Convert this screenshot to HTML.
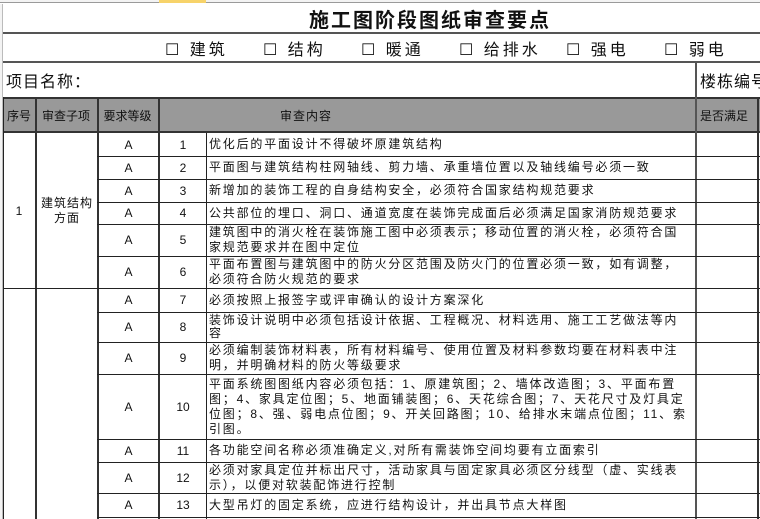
<!DOCTYPE html>
<html><head><meta charset="utf-8"><style>
body{margin:0;width:760px;height:519px;overflow:hidden;background:#fff;font-family:"Liberation Sans","Noto Sans CJK SC",sans-serif;position:relative;color:#111}
div{position:absolute;box-sizing:border-box}
.h{height:1px;background:#222}
.v{width:1px;background:#222}
.c{display:flex;align-items:center;justify-content:center;font-size:12px;white-space:nowrap}
.t{display:flex;align-items:center;font-size:12px;letter-spacing:1.8px;line-height:15px;left:209px;width:480px}
.k{top:34px;height:27px;font-size:16px;letter-spacing:3px;display:flex;align-items:center;white-space:nowrap}
</style></head><body>
<div style="left:0;top:0;width:760px;height:3px;background:#f3f3f3;border-bottom:1px solid #9a9a9a"></div>
<div style="left:159px;top:0;width:47px;height:3px;background:#f7d36a"></div>
<div style="left:0;top:4px;width:3px;height:515px;background:#f3f3f3;border-right:1px solid #bbb"></div>

<div class="c" style="left:130px;top:4px;width:600px;height:28px;font-size:20px;font-weight:bold;letter-spacing:2px">施工图阶段图纸审查要点</div>
<div class="h" style="left:3px;top:32px;width:757px;height:2px;background:#555"></div>
<div class="k" style="left:165px">☐ 建筑</div>
<div class="k" style="left:263px">☐ 结构</div>
<div class="k" style="left:361px">☐ 暖通</div>
<div class="k" style="left:459px">☐ 给排水</div>
<div class="k" style="left:566px">☐ 强电</div>
<div class="k" style="left:664px">☐ 弱电</div>
<div class="h" style="left:3px;top:61px;width:757px;height:2px;background:#555"></div>
<div class="c" style="left:6px;top:63px;height:34px;font-size:16px;letter-spacing:1px">项目名称：</div>
<div class="c" style="left:700px;top:63px;height:34px;font-size:16px;letter-spacing:1px">楼栋编号</div>
<div style="left:695px;top:61px;width:2px;height:36px;background:#555"></div>

<div style="left:3px;top:97px;width:757px;height:36px;background:#999;border-top:2px solid #333;border-bottom:2px solid #333"></div>
<div class="c" style="left:3px;top:97px;width:32px;height:36px">序号</div>
<div class="c" style="left:35px;top:97px;width:62px;height:36px">审查子项</div>
<div class="c" style="left:97px;top:97px;width:61px;height:36px">要求等级</div>
<div class="c" style="left:206px;top:97px;width:200px;height:36px;letter-spacing:1px">审查内容</div>
<div class="c" style="left:697px;top:97px;width:60px;height:36px;justify-content:flex-start;padding-left:3px">是否满足</div>

<div class="v" style="left:3px;top:97px;height:422px"></div>
<div class="v" style="left:35px;top:97px;height:422px;width:2px;background:#333"></div>
<div class="v" style="left:97px;top:97px;height:422px;width:2px;background:#333"></div>
<div class="v" style="left:158px;top:97px;height:422px;width:2px;background:#333"></div>
<div class="v" style="left:206px;top:133px;height:386px"></div>
<div class="v" style="left:695px;top:97px;height:422px;width:2px;background:#555"></div>
<div class="v" style="left:757px;top:97px;height:422px;width:2px;background:#333"></div>

<div class="h" style="left:97px;top:156px;width:663px"></div>
<div class="h" style="left:97px;top:179px;width:663px"></div>
<div class="h" style="left:97px;top:202px;width:663px"></div>
<div class="h" style="left:97px;top:224px;width:663px"></div>
<div class="h" style="left:97px;top:256px;width:663px"></div>
<div class="h" style="left:3px;top:288px;width:757px"></div>
<div class="h" style="left:97px;top:312px;width:663px"></div>
<div class="h" style="left:97px;top:342px;width:663px"></div>
<div class="h" style="left:97px;top:374px;width:663px"></div>
<div class="h" style="left:97px;top:439px;width:663px"></div>
<div class="h" style="left:97px;top:462px;width:663px"></div>
<div class="h" style="left:97px;top:493px;width:663px"></div>
<div class="h" style="left:97px;top:517px;width:663px"></div>

<div class="c" style="left:3px;top:133px;width:32px;height:155px">1</div>
<div class="c" style="left:37px;top:133px;width:60px;height:155px;white-space:normal;text-align:center;letter-spacing:1px;line-height:15px">建筑结构<br>方面</div>

<div class="c" style="left:99px;top:133px;width:59px;height:23px">A</div><div class="c" style="left:160px;top:133px;width:46px;height:23px">1</div><div class="t" style="top:133px;height:23px">优化后的平面设计不得破坏原建筑结构</div>
<div class="c" style="left:99px;top:156px;width:59px;height:23px">A</div><div class="c" style="left:160px;top:156px;width:46px;height:23px">2</div><div class="t" style="top:156px;height:23px">平面图与建筑结构柱网轴线、剪力墙、承重墙位置以及轴线编号必须一致</div>
<div class="c" style="left:99px;top:179px;width:59px;height:23px">A</div><div class="c" style="left:160px;top:179px;width:46px;height:23px">3</div><div class="t" style="top:179px;height:23px">新增加的装饰工程的自身结构安全，必须符合国家结构规范要求</div>
<div class="c" style="left:99px;top:202px;width:59px;height:22px">A</div><div class="c" style="left:160px;top:202px;width:46px;height:22px">4</div><div class="t" style="top:202px;height:22px">公共部位的埋口、洞口、通道宽度在装饰完成面后必须满足国家消防规范要求</div>
<div class="c" style="left:99px;top:224px;width:59px;height:32px">A</div><div class="c" style="left:160px;top:224px;width:46px;height:32px">5</div><div class="t" style="top:224px;height:32px">建筑图中的消火栓在装饰施工图中必须表示；移动位置的消火栓，必须符合国家规范要求并在图中定位</div>
<div class="c" style="left:99px;top:256px;width:59px;height:32px">A</div><div class="c" style="left:160px;top:256px;width:46px;height:32px">6</div><div class="t" style="top:256px;height:32px">平面布置图与建筑图中的防火分区范围及防火门的位置必须一致，如有调整，必须符合防火规范的要求</div>
<div class="c" style="left:99px;top:288px;width:59px;height:24px">A</div><div class="c" style="left:160px;top:288px;width:46px;height:24px">7</div><div class="t" style="top:288px;height:24px">必须按照上报签字或评审确认的设计方案深化</div>
<div class="c" style="left:99px;top:312px;width:59px;height:30px">A</div><div class="c" style="left:160px;top:312px;width:46px;height:30px">8</div><div class="t" style="top:312px;height:30px;line-height:13px">装饰设计说明中必须包括设计依据、工程概况、材料选用、施工工艺做法等内容</div>
<div class="c" style="left:99px;top:342px;width:59px;height:32px">A</div><div class="c" style="left:160px;top:342px;width:46px;height:32px">9</div><div class="t" style="top:342px;height:32px">必须编制装饰材料表，所有材料编号、使用位置及材料参数均要在材料表中注明，并明确材料的防火等级要求</div>
<div class="c" style="left:99px;top:374px;width:59px;height:65px">A</div><div class="c" style="left:160px;top:374px;width:46px;height:65px">10</div><div class="t" style="top:374px;height:65px;width:484px">平面系统图图纸内容必须包括：1、原建筑图；2、墙体改造图；3、平面布置图；4、家具定位图；5、地面铺装图；6、天花综合图；7、天花尺寸及灯具定位图；8、强、弱电点位图；9、开关回路图；10、给排水末端点位图；11、索引图。</div>
<div class="c" style="left:99px;top:439px;width:59px;height:23px">A</div><div class="c" style="left:160px;top:439px;width:46px;height:23px">11</div><div class="t" style="top:439px;height:23px">各功能空间名称必须准确定义,对所有需装饰空间均要有立面索引</div>
<div class="c" style="left:99px;top:462px;width:59px;height:31px">A</div><div class="c" style="left:160px;top:462px;width:46px;height:31px">12</div><div class="t" style="top:462px;height:31px">必须对家具定位并标出尺寸，活动家具与固定家具必须区分线型（虚、实线表示），以便对软装配饰进行控制</div>
<div class="c" style="left:99px;top:493px;width:59px;height:24px">A</div><div class="c" style="left:160px;top:493px;width:46px;height:24px">13</div><div class="t" style="top:493px;height:24px">大型吊灯的固定系统，应进行结构设计，并出具节点大样图</div>
</body></html>
